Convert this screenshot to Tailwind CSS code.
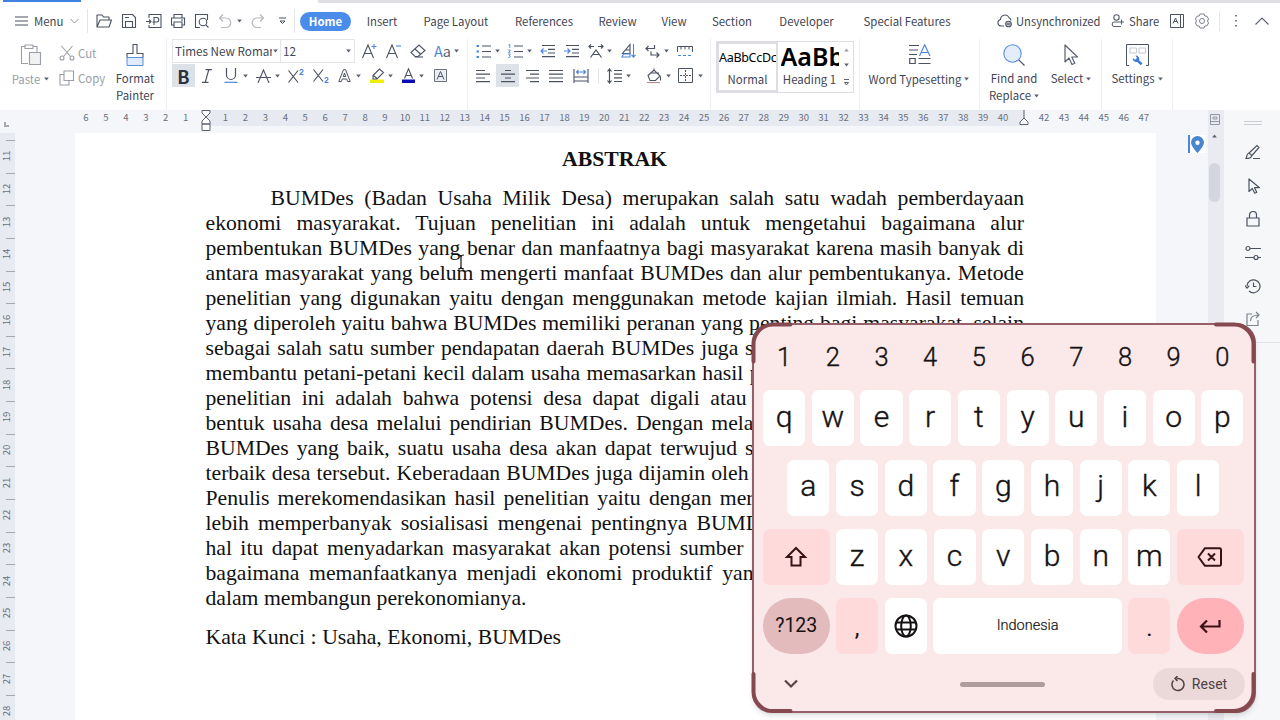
<!DOCTYPE html>
<html lang="id">
<head>
    <meta charset="UTF-8">
    <meta name="viewport" content="width=device-width, initial-scale=1.0">
    <title>Abstrak - Writer</title>
    <script src="https://cdn.jsdelivr.net/npm/@tailwindcss/browser@4"></script>
</head>
<body class="relative w-[1280px] h-[720px] overflow-hidden bg-white font-['Noto_Sans_CJK_SC','Noto_Sans',sans-serif] text-[11.4px] leading-4 text-[#3f4654]">
    <svg class="hidden">
        <symbol id="caret" viewBox="0 0 6 4"><path d="M0.200 0.300h5.600L3 3.700z" fill="#5a6170"/></symbol>
        <symbol id="pointer" viewBox="0 0 16 22"><path d="M2 1v17l4-4 3 6.500 2.800-1.300-3-6.200h5.700z" fill="none" stroke="currentColor" stroke-width="1.200" stroke-linejoin="round"/></symbol>
    </svg>

    <div class="flex flex-col h-full">
        <!-- Tab strip -->
        <div class="flex h-[3px] shrink-0">
            <div class="ml-[3px] w-[78px] h-[2px] bg-[#3f82e4]"></div>
            <div class="ml-[237px] flex-1 bg-[#dfe0e6]"></div>
        </div>

        <!-- Menu bar -->
        <div class="flex items-center h-9 shrink-0 whitespace-nowrap">
            <svg class="ml-[15px] w-[13px] h-3 shrink-0" viewBox="0 0 13 12" stroke="#4b5362" stroke-width="1.1"><path d="M0 2h13M0 6h13M0 10h13"/></svg>
            <span class="ml-1.5 w-[36px]">Menu</span>
            <svg class="w-[9px] h-2" viewBox="0 0 9 8" fill="none" stroke="#8b909b"><path d="M.5 2l4 4 4-4"/></svg>
            <div class="ml-[8px] w-px h-6 bg-[#e4e6ea]"></div>
            <div class="flex items-center ml-[4px] text-[#4b5362]">
                <div class="w-6 flex justify-center"><svg class="size-4" viewBox="0 0 16 16" fill="none" stroke="currentColor" stroke-width="1.1"><path d="M1 14V2h5l1.500 2H13v3M1 14L4 7h11.500L13 14z" stroke-linejoin="round"/></svg></div>
                <div class="w-[25px] flex justify-center"><svg class="size-4" viewBox="0 0 16 16" fill="none" stroke="currentColor" stroke-width="1.1"><path d="M1.500 1.500h10l3 3v10h-13zM4.500 14V8.500h7V14M4 4.500h4"/></svg></div>
                <div class="w-[25px] flex justify-center"><svg class="size-4" viewBox="0 0 16 16" fill="none" stroke="currentColor" stroke-width="1.1"><path d="M3 5V1.500h12v13H3V12M0 8.500h5M3 6.500l2 2-2 2M8 12V4.500h2.500a2 2 0 010 4.500H6.500"/></svg></div>
                <div class="w-6 flex justify-center"><svg class="size-4" viewBox="0 0 16 16" fill="none" stroke="currentColor" stroke-width="1.100"><path d="M4 5V1.500h8V5M4 12H1.500V5h13v7H12M4 9h8v5.500H4zM11 7h2"/></svg></div>
                <div class="w-[24px] flex justify-center"><svg class="size-4" viewBox="0 0 16 16" fill="none" stroke="currentColor" stroke-width="1.1"><path d="M6 14.500H1.500v-13h12V7"/><circle cx="9" cy="9" r="3.800"/><path d="M11.800 11.800L14.500 14.500"/></svg></div>
                <div class="w-[22px] flex justify-center text-[#b4b7be]"><svg class="w-3.5 h-4" viewBox="0 0 14 16" fill="none" stroke="currentColor" stroke-width="1.200"><path d="M5 1.500L1.500 5 5 8.500M1.500 5H8a4.500 4.500 0 010 9.500H3"/></svg></div>
                <svg class="ml-px w-[5px] h-1"><use href="#caret"/></svg>
                <div class="ml-[5px] w-[22px] flex justify-center text-[#b4b7be]"><svg class="w-3.5 h-4" viewBox="0 0 14 16" fill="none" stroke="currentColor" stroke-width="1.2"><path d="M9 1.500L12.500 5 9 8.500M12.500 5H6a4.500 4.500 0 000 9.500h4"/></svg></div>
                <svg class="ml-[10px] w-[7px] h-2" viewBox="0 0 7 8" fill="none" stroke="currentColor"><path d="M0 1h7M1 4l2.500 2.500L6 4z"/></svg>
            </div>
            <div class="ml-2 w-px h-6 bg-[#e4e6ea]"></div>
            <div class="ml-[5px] w-[51px] h-[19px] rounded-full bg-[#4a8cea] text-white font-bold text-center leading-[19px]">Home</div>
            <div class="w-[62px] text-center">Insert</div>
            <div class="w-[86px] text-center">Page Layout</div>
            <div class="w-[90px] text-center">References</div>
            <div class="w-[57px] text-center">Review</div>
            <div class="w-[56px] text-center">View</div>
            <div class="w-[60px] text-center">Section</div>
            <div class="w-[89px] text-center">Developer</div>
            <div class="w-[112px] text-center">Special Features</div>
            <svg class="ml-[34px] w-4 h-3.5" viewBox="0 0 16 14" fill="none" stroke="#4b5362" stroke-width="1.100"><path d="M7 12H4a3.300 3.300 0 01-.500-6.500A4.500 4.500 0 0112 3.500a4 4 0 012 3"/><circle cx="11.500" cy="10" r="2.800" fill="#b8bfcc"/><path d="M10 10h3"/></svg>
            <span class="ml-[3px] w-[84px] text-[11.2px]">Unsynchronized</span>
            <svg class="ml-[11px] w-[13px] h-3.5" viewBox="0 0 13 14" fill="none" stroke="#5a6170" stroke-width="1.100"><circle cx="5.500" cy="3.500" r="2.700"/><path d="M8 8H3a2.300 2.300 0 000 4.500h7M10.500 5.500v5M8 8h5"/></svg>
            <span class="ml-[5px] w-[31px] text-[11.2px]">Share</span>
            <svg class="ml-[10px] w-[14px] h-3.5" viewBox="0 0 14 14" fill="none" stroke="#4b5362"><path d="M.5.5h13v13H.5zM10.500.5v13M3 9.500L5.500 4 8 9.500M4 7.500h3"/></svg>
            <svg class="ml-[11px] w-3.5 h-4" viewBox="0 0 14 16" fill="none" stroke="#7c818c"><path d="M5 1h4l.8 2 2.200.2L13.500 6l-1 2 1 2-1.500 2.800-2.200.2L9 15H5l-.8-2-2.200-.2L.5 10l1-2-1-2L2 3.200 4.200 3z"/><circle cx="7" cy="8" r="2.500"/></svg>
            <div class="ml-[10px] w-px h-5 bg-[#e4e6ea]"></div>
            <svg class="ml-[14px] w-1 h-3" viewBox="0 0 4 12" fill="#4b5362"><rect x="1.200" y="0" width="1.500" height="1.500"/><rect x="1.200" y="5" width="1.500" height="1.500"/><rect x="1.200" y="10" width="1.500" height="1.500"/></svg>
            <svg class="ml-[17px] w-3.5 h-2" viewBox="0 0 14 8" fill="none" stroke="#5a6170" stroke-width="1.100"><path d="M.5 7.500L7 1l6.500 6.500"/></svg>
        </div>

        <!-- Ribbon -->
        <div class="flex h-[71px] shrink-0 whitespace-nowrap">
            <div class="flex w-[167px] border-r border-[#eceef1]">
                <div class="ml-[10px] w-[41px] flex flex-col items-center text-[#9a9ea7]">
                    <svg class="mt-[5px] w-[22px] h-[22px]" viewBox="0 0 22 22" fill="none" stroke="currentColor" stroke-width="1.100"><path d="M8 19.500H1.500v-17H5M13 2.500h4V8M5 1h8v3.500H5z"/><path d="M9.500 8.500h11v12h-11z" fill="#f0f1f3"/></svg>
                    <span class="mt-[5px] flex items-center gap-1">Paste<svg class="w-[5px] h-1"><use href="#caret"/></svg></span>
                </div>
                <div class="ml-2 w-[46px] text-[#9a9ea7]">
                    <div class="flex items-center mt-[6px] gap-[3px]"><svg class="w-4 h-4" viewBox="0 0 16 16" fill="none" stroke="currentColor" stroke-width="1.100"><path d="M2.500 1l9 10.500M13.500 1l-9 10.500"/><circle cx="3" cy="13" r="2"/><circle cx="13" cy="13" r="2"/></svg>Cut</div>
                    <div class="flex items-center mt-[9px] gap-[3px]"><svg class="w-4 h-4 shrink-0" viewBox="0 0 16 16" fill="none" stroke="currentColor" stroke-width="1.100"><path d="M5 1h9.500v9.500H5zM5 4.500H1V15h9v-4"/></svg>Copy</div>
                </div>
                <div class="ml-[9px] w-[42px] flex flex-col items-center text-center leading-[17px]">
                    <svg class="mt-[4px] w-[18px] h-6" viewBox="0 0 18 24" fill="none"><path d="M1 14.500h16v8H1z" fill="#dfeafb" stroke="#5b8fdc"/><path d="M1 14.500v-4h6V1.500h4v9h6v4" stroke="#4b5362" stroke-width="1.100"/></svg>
                    <span class="mt-[3px]">Format<br>Painter</span>
                </div>
            </div>

            <!-- Font -->
            <div class="w-[301px] pl-[5px] border-r border-[#eceef1]">
                <div class="flex items-center h-6">
                    <div class="flex items-center justify-between w-[109px] h-6 pl-[2px] pr-[2px] border border-[#e3e5e9]"><span class="w-[97px] overflow-hidden text-[11.700px]">Times New Roman</span><svg class="w-[5px] h-1 shrink-0"><use href="#caret"/></svg></div>
                    <div class="flex items-center justify-between w-[74px] h-6 pl-[2px] pr-[3px] border border-l-0 border-[#e3e5e9] text-[11.700px]">12<svg class="w-[5px] h-1"><use href="#caret"/></svg></div>
                    <svg class="ml-[7px] w-[15px] h-4" viewBox="0 0 15 16" fill="none" stroke="#4b5362" stroke-width="1.100"><path d="M.5 15L6 2l5.500 13M2.500 10.500h7"/><path d="M12 1v5M9.500 3.500h5" stroke="#4a86dd"/></svg>
                    <svg class="ml-[9px] w-[15px] h-4" viewBox="0 0 15 16" fill="none" stroke="#4b5362" stroke-width="1.100"><path d="M.5 15L6 2l5.500 13M2.500 10.500h7"/><path d="M10 3h5" stroke="#4a86dd"/></svg>
                    <svg class="ml-[9px] w-4 h-4" viewBox="0 0 16 16" fill="none" stroke="#4b5362" stroke-width="1.100"><path d="M1 9.500L9 2l6 5.500-7 6H5z"/><path d="M5 6l6 5.500" /><path d="M5 14h8"/></svg>
                    <span class="ml-2 text-[14.500px] tracking-tight text-[#5a6170]"><span class="text-[#4a86dd]">A</span>a</span>
                    <svg class="ml-[3px] w-[5px] h-1"><use href="#caret"/></svg>
                </div>
                <div class="flex items-center h-[23px] mt-px text-[#4b5362]">
                    <div class="w-[23px] h-[23px] bg-[#dde1e8] flex items-center justify-center text-[18px] font-bold text-[#2b3242]">B</div>
                    <svg class="ml-[7px] w-2.5 h-3.5" viewBox="0 0 10 14" fill="none" stroke="currentColor" stroke-width="1.200"><path d="M3.500.6H10M0 13.400h6.500M6.800.6L3.200 13.400"/></svg>
                    <svg class="ml-[12px] w-[14px] h-[15px]" viewBox="0 0 14 15" fill="none" stroke="currentColor" stroke-width="1.200"><path d="M2.500 0v7a4.500 4.500 0 009 0V0"/><path d="M.5 14.300h13" stroke="#4a86dd"/></svg>
                    <svg class="ml-[5px] w-[5px] h-1"><use href="#caret"/></svg>
                    <svg class="ml-2 w-[15px] h-3.5" viewBox="0 0 15 14" fill="none" stroke="currentColor" stroke-width="1.100"><path d="M2 14L7.500 1 13 14M0 8.500h15"/></svg>
                    <svg class="ml-[4px] w-[5px] h-1"><use href="#caret"/></svg>
                    <svg class="ml-[8px] w-4 h-3.5" viewBox="0 0 16 14" fill="none" stroke="currentColor" stroke-width="1.200"><path d="M.5 1.500l9.500 12M10 1.500L.5 13.500"/><path d="M12 2a1.500 1.500 0 013 0c0 1-3 2.500-3 3.500h3.500" stroke="#4a86dd"/></svg>
                    <svg class="ml-[9px] w-4 h-3.5" viewBox="0 0 16 14" fill="none" stroke="currentColor" stroke-width="1.200"><path d="M.5.5l9.500 12M10 .5L.5 12.500"/><path d="M12 10a1.500 1.500 0 013 0c0 1-3 2.500-3 3.500h3.500" stroke="#4a86dd"/></svg>
                    <svg class="ml-[9px] w-[13px] h-[13px]" viewBox="0 0 13 13" fill="none" stroke="currentColor"><path d="M.8 12.500L5.500.7h2l4.700 11.800H9.600L8.700 10H4.300l-.9 2.500zM5.300 7.500h2.400L6.500 4z"/></svg>
                    <svg class="ml-[5px] w-[5px] h-1"><use href="#caret"/></svg>
                    <svg class="ml-[8px] w-[16px] h-4" viewBox="0 0 16 16" fill="none"><path d="M1 11.500h14v3.500H1z" fill="#f2ee00"/><path d="M4 11V7.500L10.500 1l4 3.500L8 11zM4.500 7.500L8 10.500" stroke="#4b5362" stroke-width="1.100"/></svg>
                    <svg class="ml-[3px] w-[5px] h-1"><use href="#caret"/></svg>
                    <svg class="ml-[9px] w-[13px] h-[15px]" viewBox="0 0 13 15" fill="none"><path d="M0 11.500h13V15H0z" fill="#0b0bb5"/><path d="M2.500 10.500L6.500.8l4 9.700M4 7.500h5" stroke="#4b5362" stroke-width="1.100"/></svg>
                    <svg class="ml-[4px] w-[5px] h-1"><use href="#caret"/></svg>
                    <svg class="ml-[10px] w-[13px] h-[13px]" viewBox="0 0 13 13" fill="#eceef2" stroke="#6b7280"><path d="M.5.5h12v12H.5z"/><path d="M3 10.500l3.500-8 3.500 8M4.500 7.500h4" stroke="#4b5362"/></svg>
                </div>
            </div>

            <!-- Paragraph -->
            <div class="w-[243px] pl-[8px] border-r border-[#eceef1]">
                <div class="flex items-center h-6">
                    <svg class="w-[15px] h-3.5" viewBox="0 0 15 14" fill="none" stroke="#4b5362" stroke-width="1.200"><path d="M6 2h9M6 7.500h9M6 13h9"/><path d="M.5 2h2.500M.5 7.500h2.500M.5 13h2.500" stroke="#4a86dd" stroke-width="2.200"/></svg>
                    <svg class="ml-1 w-[5px] h-1"><use href="#caret"/></svg>
                    <svg class="ml-2 w-[15px] h-3.5" viewBox="0 0 15 14" fill="none" stroke="#4b5362" stroke-width="1.200"><path d="M6 2h9M6 7.500h9M6 13h9"/><path d="M.5 1L1.800.5V4M.3 6h2L.5 9h2M.3 10.700h2l-1 1.200c1.500 0 1.200 2-1 1.600" stroke="#4a86dd" stroke-width=".9"/></svg>
                    <svg class="ml-1 w-[5px] h-1"><use href="#caret"/></svg>
                    <svg class="ml-[8px] w-[15px] h-3.5" viewBox="0 0 15 14" fill="none" stroke="#4b5362" stroke-width="1.200"><path d="M2 1.500h13M8 5.300h7M8 9h7M2 12.700h13"/><path d="M7 7H1M3.500 4.500L1 7l2.500 2.500" stroke="#4a86dd"/></svg>
                    <svg class="ml-[9px] w-[15px] h-3.5" viewBox="0 0 15 14" fill="none" stroke="#4b5362" stroke-width="1.200"><path d="M2 1.500h13M8 5.300h7M8 9h7M2 12.700h13"/><path d="M0 7h6M3.500 4.500L6 7 3.500 9.500" stroke="#4a86dd"/></svg>
                    <svg class="ml-[9px] w-4 h-3.5" viewBox="0 0 16 14" fill="none" stroke="#4b5362" stroke-width="1.200"><path d="M1 2.500h5M3 .5l-2 2 2 2M10 2.500h5M13 .5l2 2-2 2M2.500 13.500L8 6l5.500 7.500M5 10.500h6"/></svg>
                    <svg class="ml-[3px] w-[5px] h-1"><use href="#caret"/></svg>
                    <svg class="ml-[9px] w-[15px] h-4" viewBox="0 0 15 16" fill="none" stroke="#4a86dd" stroke-width="1.100"><path d="M9 1.500v9H1.500zM4.500 7H9" stroke="#4b5362"/><path d="M1 14h8v-3H2.500zM12.500 1v13M10.500 11.800l2 2.400 2-2.400"/></svg>
                    <svg class="ml-[9px] w-[15px] h-3.5" viewBox="0 0 15 14" fill="none" stroke="#4b5362" stroke-width="1.200"><path d="M9.500 1v3.500H1M3.500 2L1 4.500 3.500 7M6 7.500V11h8M11.500 8.500L14 11l-2.500 2.500"/></svg>
                    <svg class="ml-[4px] w-[5px] h-1"><use href="#caret"/></svg>
                    <svg class="ml-[8px] w-4 h-3" viewBox="0 0 16 12" fill="none" stroke="#4b5362"><path d="M.5 7V1.500h15V7M4 1.500v3M8 1.500v3M12 1.500v3"/><path d="M1 10.500h14" stroke="#4a86dd" stroke-dasharray="3 2"/></svg>
                </div>
                <div class="flex items-center h-[23px] mt-px">
                    <svg class="w-[14px] h-3.5" viewBox="0 0 14 14" stroke="#4b5362" stroke-width="1.200"><path d="M0 1.500h9M0 5.200h14M0 9h9M0 12.700h14"/></svg>
                    <div class="ml-[6px] w-[23px] h-[23px] bg-[#dde1e8] flex items-center justify-center"><svg class="w-[14px] h-3.5" viewBox="0 0 14 14" stroke="#4b5362" stroke-width="1.200"><path d="M4 1.500h6M0 5.200h14M4 9h6M0 12.700h14"/></svg></div>
                    <svg class="ml-[6px] w-[14px] h-3.5" viewBox="0 0 14 14" stroke="#4b5362" stroke-width="1.200"><path d="M1 1.500h13M5 5.200h9M1 9h13M5 12.700h9"/></svg>
                    <svg class="ml-[10px] w-[14px] h-3.5" viewBox="0 0 14 14" stroke="#4b5362" stroke-width="1.200"><path d="M0 1.500h14M0 5.200h14M0 9h14M0 12.700h14"/></svg>
                    <svg class="ml-[10px] w-4 h-3.5" viewBox="0 0 16 14" fill="none" stroke="#4b5362" stroke-width="1.100"><path d="M1 0v14M15 0v14M1 8h14M1 12h14"/><path d="M3.500 3h9M5.500 1l-2 2 2 2M10.500 1l2 2-2 2" stroke="#4a86dd"/></svg>
                    <div class="ml-[9px] w-px h-4 bg-[#e4e6ea]"></div>
                    <svg class="ml-[8px] w-[15px] h-4" viewBox="0 0 15 16" fill="none" stroke="#4b5362" stroke-width="1.200"><path d="M7 2.500h8M7 6.200h8M7 9.800h8M7 13.500h8M2.500 1v14M.5 3.500l2-2.500 2 2.500M.5 12.500l2 2.500 2-2.500"/></svg>
                    <svg class="ml-[4px] w-[5px] h-1"><use href="#caret"/></svg>
                    <svg class="ml-[15px] w-4 h-4" viewBox="0 0 16 16" fill="none" stroke="#4b5362" stroke-width="1.100"><path d="M2 7.500L8 2l6 6-4.500 4.500H4zM5 5h8M8 2V.5M14.500 8.500v4"/><path d="M1 14.500h13" stroke="#b08a8a"/></svg>
                    <svg class="ml-[4px] w-[5px] h-1"><use href="#caret"/></svg>
                    <svg class="ml-[7px] w-[15px] h-[15px]" viewBox="0 0 15 15" fill="none" stroke="#4b5362"><path d="M.5.5h14v14H.5z"/><path d="M7.500 2v11M2 7.500h11" stroke-dasharray="2 1"/></svg>
                    <svg class="ml-[5px] w-[5px] h-1"><use href="#caret"/></svg>
                </div>
            </div>

            <!-- Styles -->
            <div class="w-[149px] pl-[5px] pt-[2px] border-r border-[#eceef1]">
                <div class="flex w-[138px] h-[52px] border border-[#dcdee3] text-center">
                    <div class="w-[61px] border-2 border-[#dcdee3] overflow-hidden">
                        <div class="h-[26px] pt-1.5 font-['Noto_Sans',sans-serif] text-[12.5px] tracking-[-0.3px] text-black">AaBbCcDc</div>
                        <div class="pt-px">Normal</div>
                    </div>
                    <div class="w-[61px] ml-[1px]">
                        <div class="mx-auto w-[58px] h-[29px] overflow-hidden font-['Noto_Sans',sans-serif] text-[25px] leading-[29px] font-semibold text-black text-left">AaBb</div>
                        <div>Heading 1</div>
                    </div>
                    <div class="flex flex-col items-center justify-around flex-1">
                        <svg class="w-[5px] h-1 rotate-180 opacity-60"><use href="#caret"/></svg>
                        <svg class="w-[5px] h-1"><use href="#caret"/></svg>
                        <svg class="w-[5px] h-[7px]" viewBox="0 0 5 7" fill="none" stroke="#5a6170"><path d="M0 .5h5M.5 3.500h4L2.500 6z"/></svg>
                    </div>
                </div>
            </div>

            <div class="w-[120px] flex flex-col items-center border-r border-[#eceef1]">
                <svg class="mt-[5px] w-[22px] h-[21px]" viewBox="0 0 22 21" fill="none" stroke="#4b5362" stroke-width="1.200"><path d="M0 1.500h10M0 6h9M0 10.500h8M.7 14.500h5.500v5H.7zM9.500 14.500h12M9.500 19.500h12"/><path d="M10.500 12L15.700.8 21 12M12.500 8.500h6.500" stroke="#4a86dd"/></svg>
                <span class="mt-[6px] -ml-px flex items-center gap-[3px]">Word Typesetting<svg class="w-[5px] h-1"><use href="#caret"/></svg></span>
            </div>

            <div class="w-[122px] flex border-r border-[#eceef1]">
                <div class="ml-[8px] w-[52px] flex flex-col items-center text-center leading-[17px]">
                    <svg class="mt-[5px] w-[22px] h-[22px]" viewBox="0 0 22 22"><circle cx="9.500" cy="9.500" r="8.700" fill="#e3edfb" stroke="#5b8fdc" stroke-width="1.100"/><path d="M15.800 15.800l5.700 5.700" stroke="#4b5362" stroke-width="1.200"/></svg>
                    <span class="mt-[4px]">Find and</span>
                    <span class="flex items-center gap-[3px]">Replace<svg class="w-[5px] h-1"><use href="#caret"/></svg></span>
                </div>
                <div class="ml-[9px] w-[44px] flex flex-col items-center leading-[17px]">
                    <svg class="mt-[5px] w-4 h-[22px] text-[#5a6170]"><use href="#pointer"/></svg>
                    <span class="mt-[4px] flex items-center gap-[3px]">Select<svg class="w-[5px] h-1"><use href="#caret"/></svg></span>
                </div>
            </div>

            <div class="w-[71px] flex flex-col items-center leading-[17px] border-r border-[#eceef1]">
                <svg class="mt-[5px] w-[23px] h-[22px]" viewBox="0 0 23 22" fill="none" stroke="#4b5362"><path d="M3 21.500H.5V.5h22v21H20"/><path d="M4 4h6.500v5H4zM13 4h6.500v5H13z" stroke="#c3c8d1"/><path d="M9.500 11.500a3.600 3.600 0 013.600 4.800l3.400 3-1.700 1.900-3.600-3.300a3.600 3.600 0 01-4.500-4l2.400 1.800 1.900-1.600z" fill="#3d7bd8" stroke="none"/></svg>
                <span class="mt-[4px] flex items-center gap-[3px]">Settings<svg class="w-[5px] h-1"><use href="#caret"/></svg></span>
            </div>
        </div>

        <!-- Document area -->
        <div class="flex flex-1 min-h-0 bg-[#f4f6f9]">
            <div class="w-[15px] shrink-0 flex flex-col">
                <div class="h-[23px] pl-[4px] pt-[12px]"><div class="w-[5px] h-[5px] border-l-2 border-b-2 border-[#a3a8b2]"></div></div>
                <div id="vruler" class="flex-1 pt-[7px] bg-[#e7eaf1] overflow-hidden text-[9.500px] text-[#6a7180]"></div>
            </div>

            <div class="w-[1193px] shrink-0 flex flex-col">
                <div class="flex h-4 shrink-0">
                    <div id="hruler-left" class="flex w-[191px] pl-[61px] text-[9.500px] text-[#6a7180]"></div>
                    <div id="hruler-main" class="flex w-[818px] pl-[9.500px] bg-[#e7eaf1] text-[9.500px] text-[#6a7180]"></div>
                    <div id="hruler-right" class="flex flex-1 pl-[10px] text-[9.500px] text-[#6a7180]"></div>
                </div>
                <div class="ml-[60px] mt-[7px] w-[1081px] flex-1 bg-white pl-[130.5px] font-['Liberation_Serif',serif] text-[21.7px] leading-[24.95px] text-[#111] whitespace-nowrap">
                    <h1 class="w-[818px] pt-[13.500px] font-bold text-center">ABSTRAK</h1>
                    <div id="abstract" class="mt-[15px]">
                        <p class="w-[818.500px] pl-[65px] [text-align-last:justify]">BUMDes (Badan Usaha Milik Desa) merupakan salah satu wadah pemberdayaan</p>
                        <p class="w-[818.500px] [text-align-last:justify]">ekonomi masyarakat. Tujuan penelitian ini adalah untuk mengetahui bagaimana alur</p>
                        <p class="w-[818.500px] [text-align-last:justify]">pembentukan BUMDes yang benar dan manfaatnya bagi masyarakat karena masih banyak di</p>
                        <p class="w-[818.500px] [text-align-last:justify]">antara masyarakat yang belum mengerti manfaat BUMDes dan alur pembentukanya. Metode</p>
                        <p class="w-[818.500px] [text-align-last:justify]">penelitian yang digunakan yaitu dengan menggunakan metode kajian ilmiah. Hasil temuan</p>
                        <p class="w-[818.500px] [text-align-last:justify]">yang diperoleh yaitu bahwa BUMDes memiliki peranan yang penting bagi masyarakat, selain</p>
                        <p class="w-[548px] [text-align-last:justify]">sebagai salah satu sumber pendapatan daerah BUMDes juga s</p>
                        <p class="w-[555px] [text-align-last:justify]">membantu petani-petani kecil dalam usaha memasarkan hasil p</p>
                        <p class="w-[541px] [text-align-last:justify]">penelitian ini adalah bahwa potensi desa dapat digali atau</p>
                        <p class="w-[548px] [text-align-last:justify]">bentuk usaha desa melalui pendirian BUMDes. Dengan mela</p>
                        <p class="w-[548px] [text-align-last:justify]">BUMDes yang baik, suatu usaha desa akan dapat terwujud s</p>
                        <p class="w-[543px] [text-align-last:justify]">terbaik desa tersebut. Keberadaan BUMDes juga dijamin oleh</p>
                        <p class="w-[548px] [text-align-last:justify]">Penulis merekomendasikan hasil penelitian yaitu dengan mer</p>
                        <p class="w-[556px] [text-align-last:justify]">lebih memperbanyak sosialisasi mengenai pentingnya BUMD</p>
                        <p class="w-[538px] [text-align-last:justify]">hal itu dapat menyadarkan masyarakat akan potensi sumber</p>
                        <p class="w-[548px] [text-align-last:justify]">bagaimana memanfaatkanya menjadi ekonomi produktif yan</p>
                        <p class="w-[321px] [text-align-last:justify]">dalam membangun perekonomianya.</p>
                    </div>
                    <p class="mt-[14px] w-[355.500px] [text-align-last:justify]">Kata Kunci : Usaha, Ekonomi, BUMDes</p>
                </div>
            </div>

            <!-- Scrollbar -->
            <div class="w-4 shrink-0 flex flex-col items-center pr-[3px] bg-[#e9ebf0]">
                <svg class="mt-[4px] w-[10px] h-[11px]" viewBox="0 0 10 11" fill="none" stroke="#9097a5"><path d="M.5.5h9v10h-9zM.5 7.500h9M3 3h4v2H3z"/></svg>
                <svg class="mt-[9px] w-[5px] h-1 rotate-180"><use href="#caret"/></svg>
                <div class="mt-[25px] w-[11px] h-[39px] rounded-full bg-[#d3d6de]"></div>
            </div>

            <!-- Side tools -->
            <div class="flex-1 flex flex-col items-center text-[#4b5362] bg-[#f5f7f9]">
                <div class="mt-[11px] ml-[2px] w-[18px] h-[4px] border-y border-[#c9ccd3]"></div>
                <svg class="mt-[19px] ml-[2px] w-4 h-4" viewBox="0 0 16 16" fill="none" stroke="currentColor" stroke-width="1.200"><path d="M3.500 9.500L12 1.500l2 2L6.500 12M3.500 9.500c2 0 3 1 3 2.500 0 2-3 2.500-5.500 2.500 1-1 .5-5 2.500-5zM8 14.500h7"/></svg>
                <svg class="mt-[18px] ml-[3px] w-3.5 h-4" viewBox="0 0 14 16" fill="none" stroke="currentColor" stroke-width="1.200" stroke-linejoin="round"><path d="M2 1v12.500l3.300-3L7.800 15.200l2-1-2.300-4.500h5z"/></svg>
                <svg class="mt-[17px] ml-[2px] w-3.5 h-4" viewBox="0 0 14 16" fill="none" stroke="currentColor" stroke-width="1.200"><path d="M1 7h12v8H1zM3.500 7V4a3.500 3.500 0 017 0v3"/></svg>
                <svg class="mt-[18px] ml-[2px] w-4 h-4" viewBox="0 0 16 16" fill="none" stroke="currentColor" stroke-width="1.200"><circle cx="3" cy="3.500" r="2"/><path d="M5 3.500h11M0 12.500h9M13 12.500h3"/><circle cx="11" cy="12.500" r="2"/></svg>
                <svg class="mt-[17px] ml-[2px] w-4 h-4" viewBox="0 0 16 16" fill="none" stroke="currentColor" stroke-width="1.200"><path d="M2 8a6.500 6.500 0 112 5M8.500 4.500V8.500h3M0 7.500L2 10l2.300-2.200"/></svg>
                <svg class="mt-[17px] ml-[2px] w-3.5 h-4 opacity-70" viewBox="0 0 14 16" fill="none" stroke="currentColor" stroke-width="1.200"><path d="M6 3H1v11.500h11V9M4.500 10c0-4 3-6 8-6M10 1l3 3-3 3"/></svg>
                <div class="mt-[15px] w-full h-px bg-[#e2e4e9]"></div>
            </div>
        </div>
    </div>

    <!-- Indent markers -->
    <svg class="absolute left-[201px] top-[110px] w-[10px] h-[21px]" viewBox="0 0 10 21" fill="#fff" stroke="#5a6170"><path d="M1 .5h8v2.500L5 7 1 3zM5 7l4 4v3H1v-3zM1 14h8v6.500H1z"/></svg>
    <svg class="absolute left-[1019px] top-[110px] w-[10px] h-[15px]" viewBox="0 0 10 15" fill="#fff" stroke="#5a6170"><path d="M5 0v8M5 8l4 4v2.500H1V12z"/></svg>

    <!-- Page locator -->
    <div class="absolute left-[1188px] top-[135px] flex items-center w-[18px] h-[18px] bg-white border-l-2 border-[#4a86dd]">
        <svg class="ml-[1px] w-[13px] h-[17px]" viewBox="0 0 13 17" fill="#4a86d0"><path fill-rule="evenodd" d="M6.500 0A6.500 6.500 0 0113 6.500C13 10.500 6.500 17 6.500 17S0 10.500 0 6.500A6.500 6.500 0 016.500 0zM6.500 4.500a2.200 2.200 0 100 4.400 2.200 2.200 0 000-4.400z"/></svg>
    </div>

    <!-- Text cursor -->
    <svg class="absolute left-[457px] top-[254px] w-2 h-4" viewBox="0 0 8 16" fill="none" stroke="#111" stroke-width="1.200"><path d="M1 1c2 0 3 .5 3 2 0-1.500 1-2 3-2M4 3v10M1 15c2 0 3-.5 3-2 0 1.500 1 2 3 2"/></svg>

    <!-- On-screen keyboard -->
    <div class="absolute left-[751.5px] top-[322.5px] w-[504px] h-[390px] rounded-[20px] border-2 border-[#96606a] bg-[#fbe9e9] shadow-md font-[Roboto,sans-serif] text-[#161213]">
        <svg class="absolute -left-[2.5px] -top-[2.5px] w-[505px] h-[392px]" viewBox="0 0 505 392" fill="none" stroke="#85494f" stroke-width="4" stroke-linecap="round"><path d="M2.500 39.500V22a19.500 19.500 0 0119.500-19.500h17.500M465 2.500h18A19.500 19.500 0 01502.500 22v17.500M502.500 352v17.500A19.500 19.500 0 01483 389h-18M39.500 389H22a19.500 19.500 0 01-19.500-19.500V352"/></svg>
        <div class="flex flex-col h-full pl-[9.5px] pr-[10px] pt-[4px]">
            <div id="digits" class="flex gap-[6.6px] h-[56px] mb-[5.5px]"></div>
            <div id="row1" class="flex gap-[6.6px] h-[56px]"></div>
            <div id="row2" class="flex gap-[6.6px] h-[56px] mt-[13.5px] px-[24.3px]"></div>
            <div class="flex gap-[6.6px] h-[56px] mt-[13.5px]">
                <div class="w-[66.5px] flex items-center justify-center rounded-[7px] bg-[#ffdadb]">
                    <svg class="w-6 h-6" viewBox="0 0 24 24" fill="none" stroke="#3a1216" stroke-width="2"><path d="M12 3L3 12h4.500v8.500h9V12H21z"/></svg>
                </div>
                <div id="row3" class="flex flex-1 gap-[6.6px]"></div>
                <div class="w-[66.5px] flex items-center justify-center rounded-[7px] bg-[#ffdadb]">
                    <svg class="w-[26px] h-5" viewBox="0 0 26 20" fill="none" stroke="#3a1216" stroke-width="2" stroke-linejoin="round"><path d="M8 1.200h14.500a1.500 1.500 0 011.500 1.500v14.600a1.500 1.500 0 01-1.500 1.500H8L1.500 10zM11 6.500l7 7M18 6.500l-7 7"/></svg>
                </div>
            </div>
            <div class="flex gap-[6.6px] h-[56px] mt-[13px]">
                <div class="w-[66.5px] flex items-center justify-center rounded-[28px] bg-[#e3bbbd] text-[19.500px]">?123</div>
                <div class="w-[42.1px] flex items-center justify-center rounded-[7px] bg-[#ffdadb] pt-1 text-[24px]">,</div>
                <div class="w-[42.1px] flex items-center justify-center rounded-[7px] bg-white">
                    <svg class="w-6 h-6" viewBox="0 0 24 24" fill="none" stroke="#161213" stroke-width="2"><circle cx="12" cy="12" r="10.500"/><ellipse cx="12" cy="12" rx="4.800" ry="10.500"/><path d="M2.500 8.500h19M2.500 15.500h19"/></svg>
                </div>
                <div class="flex-1 flex items-center justify-center rounded-[7px] bg-white text-[14.500px] font-light [-webkit-text-stroke:0.2px]">Indonesia</div>
                <div class="w-[42.1px] flex items-center justify-center rounded-[7px] bg-[#ffdadb] pt-1 text-[24px]">.</div>
                <div class="w-[66.5px] flex items-center justify-center rounded-[28px] bg-[#ffb2b8]">
                    <svg class="w-[22px] h-4" viewBox="0 0 22 16" fill="none" stroke="#3a1216" stroke-width="2.200"><path d="M20.500 2v6.500H2M8 2.500l-6 6 6 6"/></svg>
                </div>
            </div>
            <div class="flex items-center mt-[14px] h-8">
                <svg class="ml-[21px] w-[14px] h-2.5" viewBox="0 0 14 10" fill="none" stroke="#5a4345" stroke-width="2.200"><path d="M1 1.500l6 6 6-6"/></svg>
                <div class="ml-[162px] w-[85px] h-[5px] rounded-full bg-[#ad9d9f]"></div>
                <div class="ml-[108px] -mr-3 w-[92px] h-8 shrink-0 flex items-center justify-center gap-[7px] rounded-full bg-[#ebd9da] text-[14px] text-[#4f4142]">
                    <svg class="w-3.5 h-4" viewBox="0 0 14 16" fill="none" stroke="#4f4142" stroke-width="1.500"><path d="M5.500 2.500H7a6 6 0 11-4.500 2M6.500 0L4 2.500 6.500 5"/></svg>
                    Reset
                </div>
            </div>
        </div>
    </div>

    <script>
        function fill(id, items, cls) {
            document.getElementById(id).innerHTML = items.map(t => `<div class="${cls}">${t}</div>`).join('');
        }
        const range = (from, to) => Array.from({ length: to - from + 1 }, (_, i) => from + i);

        const tick = 'w-[19.95px] shrink-0 text-center leading-[15px]';
        fill('hruler-left', [6, 5, 4, 3, 2, 1], tick);
        fill('hruler-main', range(1, 40), tick);
        fill('hruler-right', range(42, 47), tick);
        fill('vruler', range(11, 28).map(n => `<span class="-rotate-90">${n}</span>`),
            'relative h-[32.65px] pr-[2px] flex items-center justify-center before:absolute before:top-0 before:right-0 before:w-[9px] before:h-px before:bg-[#a3a8b2]');

        const key = 'flex-1 flex items-center justify-center rounded-[7px] bg-white pb-[3px] text-[30px] font-light [-webkit-text-stroke:0.4px]';
        fill('digits', [...'1234567890'], 'flex-1 flex items-center justify-center text-[25.500px] font-light [-webkit-text-stroke:0.4px]');
        fill('row1', [...'qwertyuiop'], key);
        fill('row2', [...'asdfghjkl'], key);
        fill('row3', [...'zxcvbnm'], key);
    </script>
</body>
</html>
